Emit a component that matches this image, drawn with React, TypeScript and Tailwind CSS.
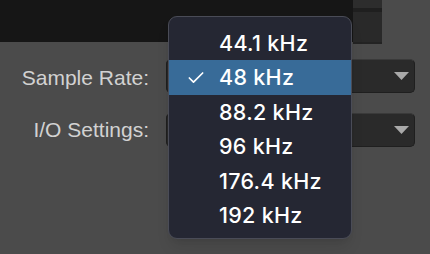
import { Check } from "lucide-react";

const rates = ["44.1 kHz", "48 kHz", "88.2 kHz", "96 kHz", "176.4 kHz", "192 kHz"];
const selected = "48 kHz";

function SelectBox() {
  return (
    <div className="flex h-[34px] w-[249px] items-center justify-end rounded-[5px] border border-[#1f1f1f] border-t-[#3a3a3a] bg-[#2a2a2a] pr-[5px]">
      <svg width="15" height="8" viewBox="0 0 15 8">
        <path d="M0 0 H15 L7.5 8 Z" fill="#a9a9a9" />
      </svg>
    </div>
  );
}

export default function App() {
  return (
    <div className="relative h-[254px] w-[430px] overflow-hidden bg-[#4b4b4b] font-['Liberation_Sans',Arial,sans-serif]">
      {/* Top strip */}
      <div className="flex">
        <div className="h-[42px] w-[353px] bg-[#161616]" />
        <div className="flex h-[44px] w-[29px] flex-col border-b-2 border-[#232323]">
          <div className="h-[8px] bg-[#2d2d2d]" />
          <div className="h-[4px] bg-[#1f1f1f]" />
          <div className="flex-1 bg-[#292929]" />
        </div>
      </div>

      {/* Form rows */}
      <div className="mt-[15px] flex flex-col gap-[19px]">
        <div className="flex items-center">
          <div className="w-[149px] pt-[3px] text-right text-[21px] text-[#d2d2d2]">Sample Rate:</div>
          <div className="ml-[17px]">
            <SelectBox />
          </div>
        </div>
        <div className="flex items-center">
          <div className="w-[149px] pt-[1px] text-right text-[21px] text-[#d2d2d2]">I/O Settings:</div>
          <div className="ml-[17px]">
            <SelectBox />
          </div>
        </div>
      </div>

      {/* Popup menu */}
      <div className="absolute left-[168px] top-[16px] w-[184px] rounded-[9px] border border-[#4a4c57] bg-[#252733] pb-[6px] pt-[9px] shadow-lg font-['Inter',sans-serif]">
        {rates.map((r) => (
          <div
            key={r}
            className={`flex h-[34.4px] items-center text-[21.5px] font-medium text-white ${r === selected ? "bg-[#386b98]" : ""}`}
          >
            <div className="flex w-[50px] justify-center pl-[3px]">
              {r === selected && <Check size={20} strokeWidth={2} />}
            </div>
            <span className="tracking-[0.3px]">{r}</span>
          </div>
        ))}
      </div>
    </div>
  );
}
